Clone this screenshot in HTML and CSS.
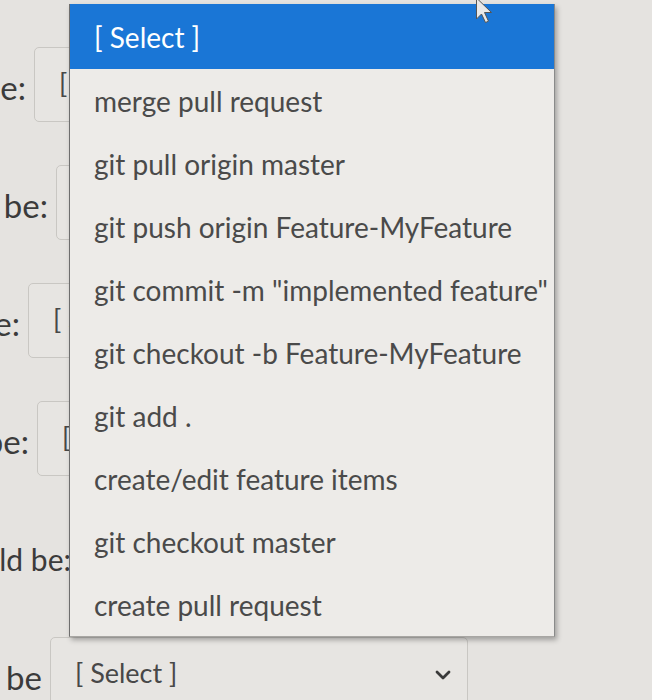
FILE: index.html
```html
<!DOCTYPE html>
<html lang="en">
<head>
<meta charset="utf-8">
<title>Select steps</title>
<link rel="stylesheet" href="styles.css">
</head>
<body>
<div class="page">
  <div class="form">
    <div class="row">
      <div class="label w1"><span>The first step should be:</span></div>
      <div class="select"><span>[ Select ]</span></div>
    </div>
    <div class="row">
      <div class="label w2"><span>The second step should be:</span></div>
      <div class="select"><span>[ Select ]</span></div>
    </div>
    <div class="row">
      <div class="label w3"><span>The third step should be:</span></div>
      <div class="select"><span>[ Select ]</span></div>
    </div>
    <div class="row">
      <div class="label w4"><span>The fourth step should be:</span></div>
      <div class="select"><span>[ Select ]</span></div>
    </div>
    <div class="row">
      <div class="label w5"><span>The fifth step should be:</span></div>
      <div class="select"><span>[ Select ]</span></div>
    </div>
    <div class="row">
      <div class="label w6"><span>The last step would be</span></div>
      <div class="select"><span>[ Select ]</span>
        <svg class="chev-icon" width="16" height="10" viewBox="0 0 16 10"><path d="M2 2 L8 8 L14 2" fill="none" stroke="#3a3a3a" stroke-width="2.8" stroke-linecap="round" stroke-linejoin="round"/></svg>
      </div>
    </div>
  </div>

  <ul class="menu">
    <li class="opt active">[ Select ]</li>
    <li class="opt">merge pull request</li>
    <li class="opt">git pull origin master</li>
    <li class="opt">git push origin Feature-MyFeature</li>
    <li class="opt">git commit -m "implemented feature"</li>
    <li class="opt">git checkout -b Feature-MyFeature</li>
    <li class="opt">git add .</li>
    <li class="opt">create/edit feature items</li>
    <li class="opt">git checkout master</li>
    <li class="opt">create pull request</li>
  </ul>

  <svg class="cursor" width="18" height="27" viewBox="0 0 17 27">
    <path d="M1 1 L1 22 L6 17 L10 25.5 L13 24.2 L9 15.5 L16 15.5 Z" fill="#e9e9e9" stroke="#555" stroke-width="1" stroke-linejoin="round"/>
  </svg>
</div>
</body>
</html>
```

FILE: styles.css
```css
html, body {
  margin: 0;
  padding: 0;
}
body {
  background: #e5e3e0;
  font-family: Lato, "Open Sans", sans-serif;
  width: 652px;
  height: 700px;
  overflow: hidden;
}
.page {
  position: relative;
  width: 652px;
  height: 700px;
  overflow: hidden;
}
.form {
  display: flex;
  flex-direction: column;
  gap: 43px;
  padding-top: 47px;
}
.row {
  display: flex;
  align-items: flex-start;
  gap: 8px;
}
.label {
  display: flex;
  justify-content: flex-end;
  overflow: hidden;
  white-space: nowrap;
  margin-top: 20px;
  font-size: 33px;
  line-height: 40px;
  color: #3b3b3b;
  flex: none;
}
.w1 { width: 26px; }
.w2 { width: 48px; }
.w3 { width: 20px; }
.w4 { width: 29px; }
.w5 { width: 71px; font-size: 30px; }
.w6 { width: 42px; }
.select {
  display: flex;
  align-items: baseline;
  justify-content: space-between;
  box-sizing: border-box;
  width: 418px;
  height: 75px;
  padding: 0 16px 0 24px;
  border: 1px solid #c9c7c3;
  border-radius: 5px;
  background: #e7e5e2;
  font-size: 27px;
  line-height: 70px;
  color: #484848;
  white-space: nowrap;
}
.chev-icon {
  align-self: center;
}
.menu {
  position: absolute;
  left: 69px;
  top: 4px;
  width: 484px;
  margin: 0;
  padding: 0;
  list-style: none;
  background: #edebe8;
  border-left: 1px solid #6e6e6e;
  border-right: 1px solid #8a8a8a;
  border-bottom: 1px solid #a8a6a3;
  box-shadow: 2px 3px 5px rgba(0, 0, 0, 0.3);
}
.opt {
  height: 63px;
  display: flex;
  align-items: center;
  padding-left: 24px;
  font-size: 28px;
  color: #4a4a4a;
  white-space: nowrap;
}
.opt.active {
  height: 65px;
  background: #1a76d6;
  color: #ffffff;
}
.cursor {
  position: absolute;
  left: 475px;
  top: -3px;
}
```
